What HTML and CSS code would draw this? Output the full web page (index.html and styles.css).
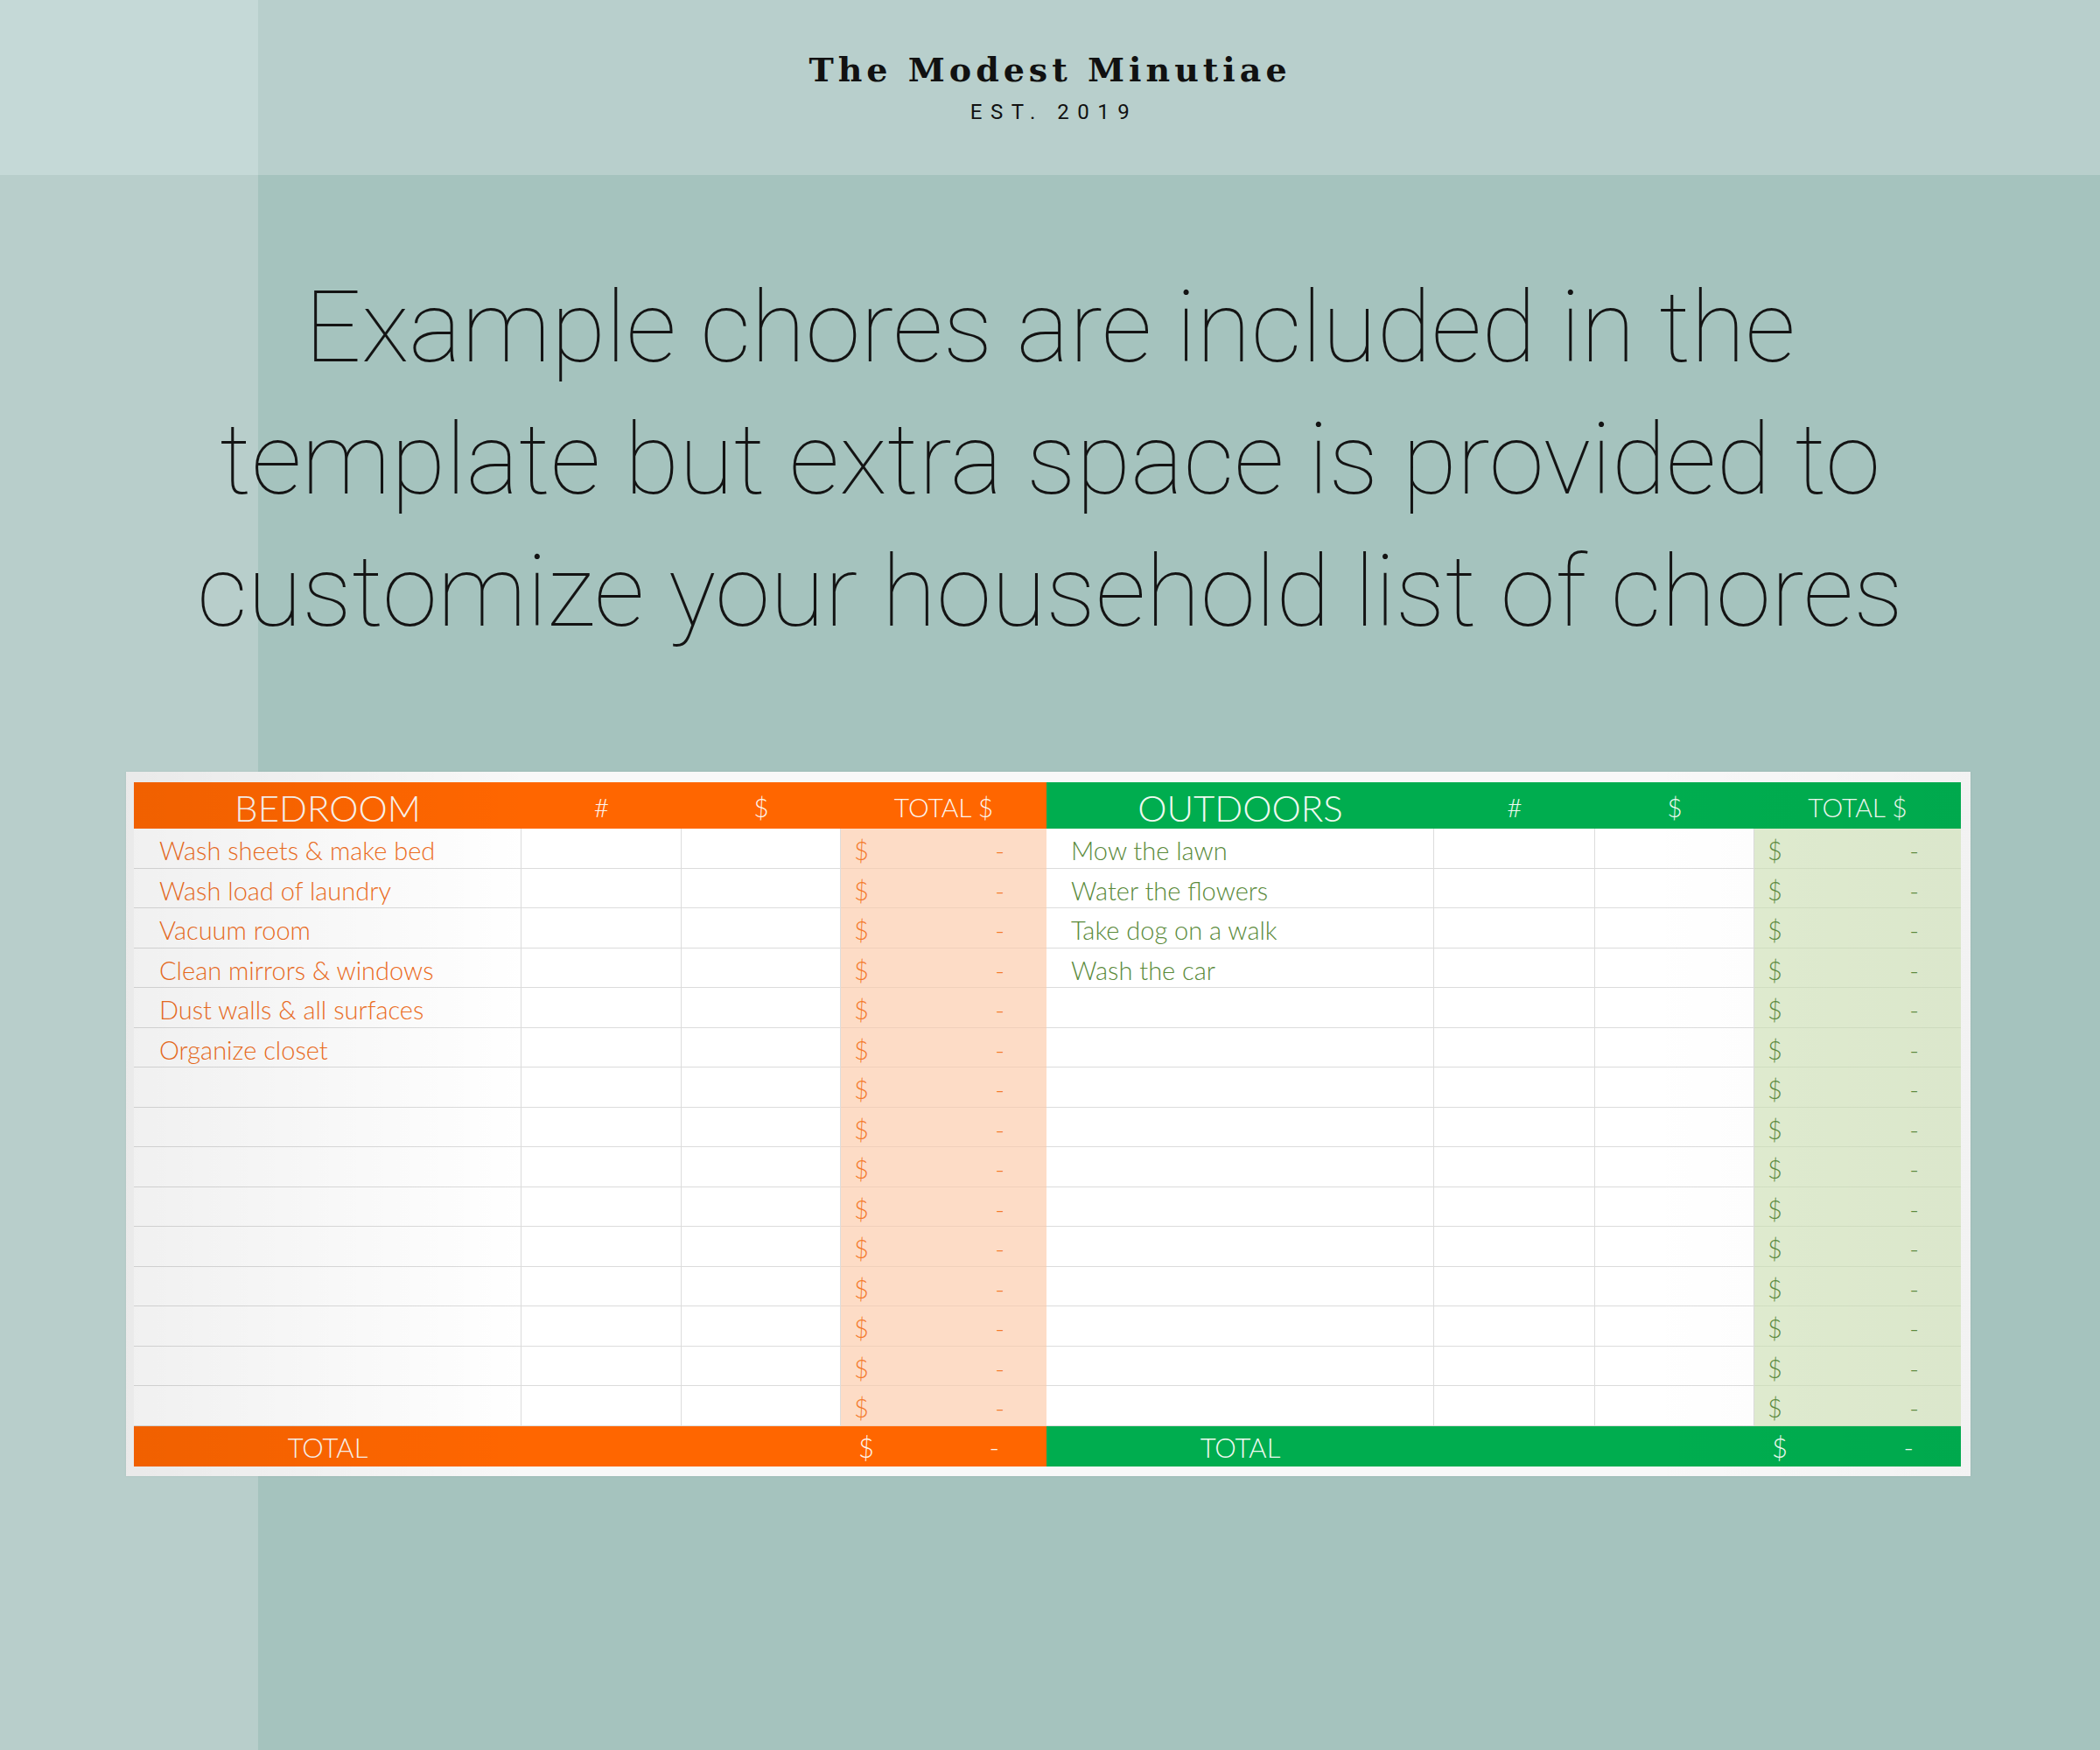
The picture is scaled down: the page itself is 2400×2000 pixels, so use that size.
FILE: index.html
```html
<!DOCTYPE html>
<html lang="en">
<head>
<meta charset="utf-8">
<title>The Modest Minutiae – Chore Chart</title>
<link rel="stylesheet" href="styles.css">
</head>
<body>
<div class="page">
  <header class="brand">
    <div class="brand-name">The Modest Minutiae</div>
    <div class="brand-est">EST. 2019</div>
  </header>
  <main class="main">
    <h1 class="headline">Example chores are included in the<br>template but extra space is provided to<br>customize your household list of chores</h1>
    <section class="sheet">
      <div class="grid">
        <div class="hd hd-o hd-title">BEDROOM</div><div class="hd hd-o">#</div><div class="hd hd-o">$</div><div class="hd hd-o">TOTAL $</div>
        <div class="hd hd-g hd-title">OUTDOORS</div><div class="hd hd-g">#</div><div class="hd hd-g">$</div><div class="hd hd-g">TOTAL $</div>

        <div class="c task o">Wash sheets &amp; make bed</div><div class="c"></div><div class="c"></div><div class="c tot to"><span>$</span><span>-</span></div>
        <div class="c task g">Mow the lawn</div><div class="c"></div><div class="c"></div><div class="c tot tg"><span>$</span><span>-</span></div>

        <div class="c task o">Wash load of laundry</div><div class="c"></div><div class="c"></div><div class="c tot to"><span>$</span><span>-</span></div>
        <div class="c task g">Water the flowers</div><div class="c"></div><div class="c"></div><div class="c tot tg"><span>$</span><span>-</span></div>

        <div class="c task o">Vacuum room</div><div class="c"></div><div class="c"></div><div class="c tot to"><span>$</span><span>-</span></div>
        <div class="c task g">Take dog on a walk</div><div class="c"></div><div class="c"></div><div class="c tot tg"><span>$</span><span>-</span></div>

        <div class="c task o">Clean mirrors &amp; windows</div><div class="c"></div><div class="c"></div><div class="c tot to"><span>$</span><span>-</span></div>
        <div class="c task g">Wash the car</div><div class="c"></div><div class="c"></div><div class="c tot tg"><span>$</span><span>-</span></div>

        <div class="c task o">Dust walls &amp; all surfaces</div><div class="c"></div><div class="c"></div><div class="c tot to"><span>$</span><span>-</span></div>
        <div class="c task g"></div><div class="c"></div><div class="c"></div><div class="c tot tg"><span>$</span><span>-</span></div>

        <div class="c task o">Organize closet</div><div class="c"></div><div class="c"></div><div class="c tot to"><span>$</span><span>-</span></div>
        <div class="c task g"></div><div class="c"></div><div class="c"></div><div class="c tot tg"><span>$</span><span>-</span></div>

        <div class="c task o"></div><div class="c"></div><div class="c"></div><div class="c tot to"><span>$</span><span>-</span></div>
        <div class="c task g"></div><div class="c"></div><div class="c"></div><div class="c tot tg"><span>$</span><span>-</span></div>

        <div class="c task o"></div><div class="c"></div><div class="c"></div><div class="c tot to"><span>$</span><span>-</span></div>
        <div class="c task g"></div><div class="c"></div><div class="c"></div><div class="c tot tg"><span>$</span><span>-</span></div>

        <div class="c task o"></div><div class="c"></div><div class="c"></div><div class="c tot to"><span>$</span><span>-</span></div>
        <div class="c task g"></div><div class="c"></div><div class="c"></div><div class="c tot tg"><span>$</span><span>-</span></div>

        <div class="c task o"></div><div class="c"></div><div class="c"></div><div class="c tot to"><span>$</span><span>-</span></div>
        <div class="c task g"></div><div class="c"></div><div class="c"></div><div class="c tot tg"><span>$</span><span>-</span></div>

        <div class="c task o"></div><div class="c"></div><div class="c"></div><div class="c tot to"><span>$</span><span>-</span></div>
        <div class="c task g"></div><div class="c"></div><div class="c"></div><div class="c tot tg"><span>$</span><span>-</span></div>

        <div class="c task o"></div><div class="c"></div><div class="c"></div><div class="c tot to"><span>$</span><span>-</span></div>
        <div class="c task g"></div><div class="c"></div><div class="c"></div><div class="c tot tg"><span>$</span><span>-</span></div>

        <div class="c task o"></div><div class="c"></div><div class="c"></div><div class="c tot to"><span>$</span><span>-</span></div>
        <div class="c task g"></div><div class="c"></div><div class="c"></div><div class="c tot tg"><span>$</span><span>-</span></div>

        <div class="c task o"></div><div class="c"></div><div class="c"></div><div class="c tot to"><span>$</span><span>-</span></div>
        <div class="c task g"></div><div class="c"></div><div class="c"></div><div class="c tot tg"><span>$</span><span>-</span></div>

        <div class="c task o"></div><div class="c"></div><div class="c"></div><div class="c tot to"><span>$</span><span>-</span></div>
        <div class="c task g"></div><div class="c"></div><div class="c"></div><div class="c tot tg"><span>$</span><span>-</span></div>

        <div class="ft ft-o ft-label">TOTAL</div><div class="ft ft-o"></div><div class="ft ft-o"></div><div class="ft ft-o ft-sum"><span>$</span><span>-</span></div>
        <div class="ft ft-g ft-label">TOTAL</div><div class="ft ft-g"></div><div class="ft ft-g"></div><div class="ft ft-g ft-sum"><span>$</span><span>-</span></div>
      </div>
    </section>
  </main>
</div>
</body>
</html>
```

FILE: styles.css
```css
html, body {
  margin: 0;
  padding: 0;
}
body {
  width: 2400px;
  height: 2000px;
  overflow: hidden;
  font-family: "Lato", "Liberation Sans", sans-serif;
}
.page {
  display: flex;
  flex-direction: column;
  width: 2400px;
  height: 2000px;
}
.brand {
  height: 200px;
  box-sizing: border-box;
  background: linear-gradient(to right, #c5d9d7 0, #c5d9d7 295px, #b8cfcc 295px, #b8cfcc 100%);
  display: flex;
  flex-direction: column;
  align-items: center;
  padding-top: 56px;
}
.brand-name {
  font-family: "DejaVu Serif", "Liberation Serif", serif;
  font-weight: bold;
  font-size: 38px;
  line-height: 48px;
  letter-spacing: 5px;
  color: #111;
}
.brand-est {
  font-family: "Roboto", "Liberation Sans", sans-serif;
  font-weight: 400;
  font-size: 24px;
  line-height: 30px;
  letter-spacing: 9.5px;
  margin-top: 9px;
  margin-left: 9px;
  color: #111;
}
.main {
  flex: 1;
  background: linear-gradient(to right, #b8cecb 0, #b8cecb 295px, #a5c3be 295px, #a5c3be 100%);
  display: flex;
  flex-direction: column;
  align-items: flex-start;
}
.headline {
  align-self: stretch;
  margin: 99px 0 0 0;
  text-align: center;
  font-family: "Roboto", "Inter", sans-serif;
  font-weight: 100;
  font-size: 114px;
  line-height: 151px;
  color: #141414;
  letter-spacing: 0;
}
.sheet {
  position: relative;
  margin: 130px 0 0 144px;
  width: 2108px;
  box-sizing: border-box;
  padding: 12px 11px 11px 9px;
  background: #f8f8f8;
  box-shadow: 0 0 2px rgba(0,0,0,0.08);
}
.sheet::after {
  content: "";
  position: absolute;
  inset: 0;
  pointer-events: none;
  background: linear-gradient(to right, rgba(0,0,0,0.06) 0, rgba(0,0,0,0) 22%, rgba(0,0,0,0) 82%, rgba(0,0,0,0.025) 100%);
}
.grid {
  display: grid;
  grid-template-columns: 443px 183px 182px 235px 443px 184px 182px 236px;
  grid-template-rows: 53px repeat(15, 45.5px) 46px;
  background: #fff;
}
.hd {
  display: flex;
  align-items: center;
  justify-content: center;
  color: #fdf5ee;
  font-weight: 300;
  font-size: 30px;
  padding-top: 2px;
}
.hd-o { background: #ff6600; }
.hd-g { background: #00ad4f; color: #effaf1; }
.hd-title {
  font-size: 42px;
  padding-top: 4px;
}
.c {
  box-sizing: border-box;
  border-bottom: 1px solid #dcdcdc;
  border-right: 1px solid #dcdcdc;
  display: flex;
  align-items: center;
  font-size: 29px;
  font-weight: 300;
  padding-top: 5px;
  white-space: nowrap;
}
.task {
  padding-left: 29px;
}
.task.o { color: #f06e1e; }
.task.g { color: #5a8a3a; padding-left: 28px; }
.tot {
  justify-content: space-between;
  padding: 5px 48px 0 15px;
  border-right: none;
}
.to {
  background: #fddcc6;
  color: #f47a2c;
  border-bottom-color: #f0d0bb;
}
.tg {
  background: #e0ecd0;
  color: #5d8b3f;
  border-bottom-color: #d2dfc2;
}
.ft {
  display: flex;
  align-items: center;
  color: #fdf5ee;
  font-size: 31px;
  font-weight: 300;
  padding-top: 2px;
}
.ft-o { background: #ff6600; }
.ft-g { background: #00ad4f; color: #effaf1; }
.ft-label {
  justify-content: center;
}
.ft-sum {
  justify-content: space-between;
  padding: 2px 54px 0 20px;
}
```
